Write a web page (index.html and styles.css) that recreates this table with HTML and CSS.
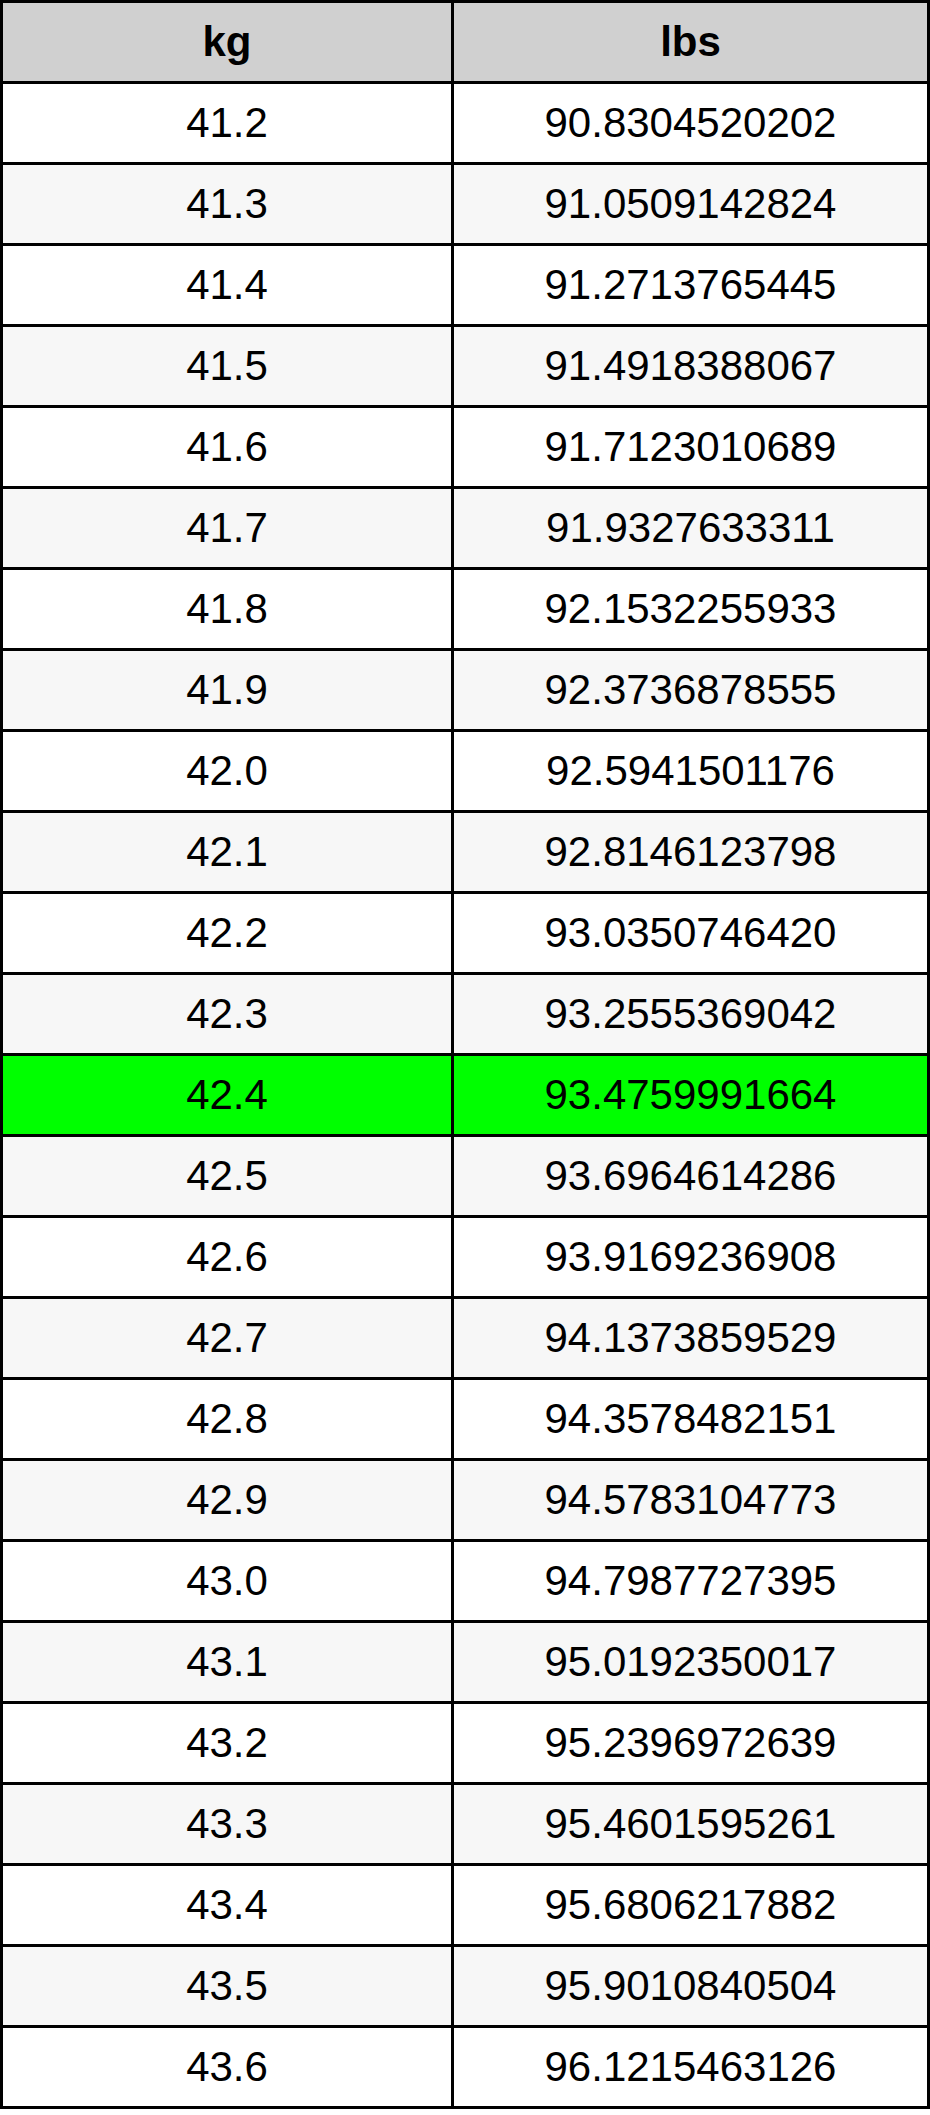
FILE: index.html
```html
<!DOCTYPE html>
<html lang="en">
<head>
<meta charset="utf-8">
<title>kg to lbs</title>
<link rel="stylesheet" href="styles.css">
</head>
<body>
<table class="conv">
<colgroup><col class="c1"><col class="c2"></colgroup>
<thead>
<tr><th>kg</th><th>lbs</th></tr>
</thead>
<tbody>
<tr><td>41.2</td><td>90.8304520202</td></tr>
<tr><td>41.3</td><td>91.0509142824</td></tr>
<tr><td>41.4</td><td>91.2713765445</td></tr>
<tr><td>41.5</td><td>91.4918388067</td></tr>
<tr><td>41.6</td><td>91.7123010689</td></tr>
<tr><td>41.7</td><td>91.9327633311</td></tr>
<tr><td>41.8</td><td>92.1532255933</td></tr>
<tr><td>41.9</td><td>92.3736878555</td></tr>
<tr><td>42.0</td><td>92.5941501176</td></tr>
<tr><td>42.1</td><td>92.8146123798</td></tr>
<tr><td>42.2</td><td>93.0350746420</td></tr>
<tr><td>42.3</td><td>93.2555369042</td></tr>
<tr class="hl"><td>42.4</td><td>93.4759991664</td></tr>
<tr><td>42.5</td><td>93.6964614286</td></tr>
<tr><td>42.6</td><td>93.9169236908</td></tr>
<tr><td>42.7</td><td>94.1373859529</td></tr>
<tr><td>42.8</td><td>94.3578482151</td></tr>
<tr><td>42.9</td><td>94.5783104773</td></tr>
<tr><td>43.0</td><td>94.7987727395</td></tr>
<tr><td>43.1</td><td>95.0192350017</td></tr>
<tr><td>43.2</td><td>95.2396972639</td></tr>
<tr><td>43.3</td><td>95.4601595261</td></tr>
<tr><td>43.4</td><td>95.6806217882</td></tr>
<tr><td>43.5</td><td>95.9010840504</td></tr>
<tr><td>43.6</td><td>96.1215463126</td></tr>
</tbody>
</table>
</body>
</html>
```

FILE: styles.css
```css
html, body {
  margin: 0;
  padding: 0;
  background: #ffffff;
}

.conv {
  width: 930px;
  table-layout: fixed;
  border-collapse: separate;
  border-spacing: 3px;
  background: #000000;
  font-family: "Liberation Sans", Arial, sans-serif;
  font-size: 42px;
  color: #000000;
}

.c1 { width: 448px; }
.c2 { width: 473px; }

.conv th,
.conv td {
  height: 78px;
  padding: 0;
  text-align: center;
  vertical-align: middle;
  line-height: 48px;
}

.conv th {
  background: #d0d0d0;
  font-weight: bold;
}

.conv tbody tr:nth-child(odd) td {
  background: #ffffff;
}

.conv tbody tr:nth-child(even) td {
  background: #f7f7f7;
}

.conv tbody tr.hl td {
  background: #00ff00;
}
```
